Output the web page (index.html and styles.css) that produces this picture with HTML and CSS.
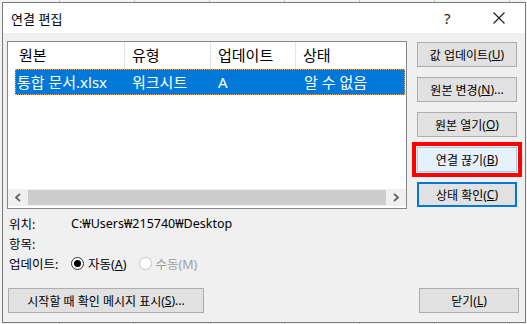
FILE: index.html
```html
<!DOCTYPE html>
<html lang="ko">
<head>
<meta charset="utf-8">
<title>연결 편집</title>
<link rel="stylesheet" href="styles.css">
</head>
<body>
<div class="window">
  <div class="titlebar">
    <span class="title">연결 편집</span>
    <span class="help">?</span>
    <span class="close">
      <svg width="12" height="12" viewBox="0 0 12 12"><path d="M0.5 0.5 L11.5 11.5 M11.5 0.5 L0.5 11.5" stroke="#1a1a1a" stroke-width="1.1" fill="none"/></svg>
    </span>
  </div>
  <div class="content">
    <div class="top">
      <div class="left">
        <div class="list">
          <div class="list-head">
            <div class="hcell c1">원본</div>
            <div class="hcell c2">유형</div>
            <div class="hcell c3">업데이트</div>
            <div class="hcell c4">상태</div>
          </div>
          <div class="list-row selected">
            <div class="cell c1">통합 문서.xlsx</div>
            <div class="cell c2">워크시트</div>
            <div class="cell c3">A</div>
            <div class="cell c4">알 수 없음</div>
          </div>
          <div class="list-space"></div>
          <div class="hscroll">
            <div class="arrow">
              <svg width="8" height="9" viewBox="0 0 8 9"><path d="M6 0.8 L2 4.5 L6 8.2" stroke="#606060" stroke-width="1.8" fill="none"/></svg>
            </div>
            <div class="thumb"></div>
            <div class="arrow">
              <svg width="8" height="9" viewBox="0 0 8 9"><path d="M2 0.8 L6 4.5 L2 8.2" stroke="#606060" stroke-width="1.8" fill="none"/></svg>
            </div>
          </div>
        </div>
        <div class="info">
          <div class="info-row"><span class="label">위치:</span><span class="value">C:₩Users₩215740₩Desktop</span></div>
          <div class="info-row"><span class="label">항목:</span><span class="value"></span></div>
          <div class="info-row">
            <span class="label">업데이트:</span>
            <span class="radio checked"><span class="dot"></span></span>
            <span class="rlabel">자동(<u>A</u>)</span>
            <span class="radio disabled"></span>
            <span class="rlabel disabled-text">수동(M)</span>
          </div>
        </div>
      </div>
      <div class="buttons">
        <div class="btn">값 업데이트(<u>U</u>)</div>
        <div class="btn">원본 변경(<u>N</u>)...</div>
        <div class="btn">원본 열기(<u>O</u>)</div>
        <div class="btn hover highlight">연결 끊기(<u>B</u>)</div>
        <div class="btn default">상태 확인(<u>C</u>)</div>
      </div>
    </div>
    <div class="bottom">
      <div class="btn wide">시작할 때 확인 메시지 표시(<u>S</u>)...</div>
      <div class="btn">닫기(<u>L</u>)</div>
    </div>
  </div>
</div>
</body>
</html>
```
FILE: styles.css
```css
html, body {
  margin: 0;
  padding: 0;
}
body {
  width: 527px;
  height: 324px;
  overflow: hidden;
  padding: 2px 0 0 2px;
  box-sizing: border-box;
  background-color: #f3f3f3;
  background-image: repeating-linear-gradient(to right, transparent 0 59px, #c6c6c6 59px 60px, transparent 60px 75px);
  font-family: "Noto Sans", "Noto Sans CJK KR", sans-serif;
  color: #000;
}
.window {
  width: 524px;
  height: 321px;
  box-sizing: border-box;
  border: 1px solid #7a7a7a;
  background: #f0f0f0;
  display: flex;
  flex-direction: column;
}
.titlebar {
  height: 30px;
  background: #fff;
  display: flex;
  align-items: center;
  flex: none;
}
.title {
  font-family: "Noto Sans CJK KR", sans-serif;
  font-size: 13px;
  margin-left: 8px;
  flex: 1;
}
.help {
  font-family: "Noto Sans", sans-serif;
  font-size: 15px;
  width: 12px;
  margin-right: 37px;
  color: #1a1a1a;
}
.close {
  display: flex;
  margin-right: 20px;
}
.content {
  padding: 8px 6px 0 4px;
  display: flex;
  flex-direction: column;
}
.top {
  display: flex;
  gap: 10px;
}
.left {
  width: 400px;
  display: flex;
  flex-direction: column;
}
.list {
  height: 168px;
  box-sizing: border-box;
  border: 1px solid #828790;
  background: #fff;
  display: flex;
  flex-direction: column;
  font-family: "Noto Sans", "Noto Sans CJK KR", sans-serif;
  font-size: 15px;
}
.list-head {
  height: 27px;
  display: flex;
  flex: none;
}
.hcell {
  box-sizing: border-box;
  border-right: 1px solid #e5e5e5;
  padding-left: 7px;
  line-height: 27px;
  white-space: nowrap;
}
.c1 { width: 117px; padding-left: 11px; }
.c2 { width: 86px; }
.c3 { width: 85px; }
.c4 { width: 108px; border-right: none; }
.list-row {
  height: 26px;
  display: flex;
  margin-left: 7px;
  margin-right: 1px;
  flex: none;
}
.list-row .cell {
  line-height: 26px;
  padding-left: 7px;
  box-sizing: border-box;
  white-space: nowrap;
}
.list-row .c1 { width: 110px; padding-left: 2px; }
.list-row .c2 { width: 86px; }
.list-row .c3 { width: 85px; }
.list-row .c4 { width: 107px; padding-left: 8px; }
.selected {
  background: #0078d7;
  color: #fff;
  outline: 1px dotted #f0a050;
  outline-offset: -1px;
}
.list-space {
  flex: 1;
}
.hscroll {
  height: 17px;
  display: flex;
  background: #f0f0f0;
  flex: none;
  margin-bottom: 2px;
}
.arrow {
  width: 20px;
  display: flex;
  align-items: center;
  justify-content: center;
}
.thumb {
  flex: 1;
  background: #cdcdcd;
  margin: 1px 0;
}
.info {
  padding-top: 4px;
  padding-left: 2px;
  font-family: "Noto Sans", "Noto Sans CJK KR", sans-serif;
  font-size: 12.5px;
}
.info-row {
  height: 20px;
  display: flex;
  align-items: center;
}
.label {
  width: 62px;
  flex: none;
}
.radio {
  width: 13px;
  height: 13px;
  box-sizing: border-box;
  border-radius: 50%;
  border: 1px solid #333;
  background: #fff;
  display: flex;
  align-items: center;
  justify-content: center;
  margin-right: 4px;
  flex: none;
}
.radio .dot {
  width: 7px;
  height: 7px;
  border-radius: 50%;
  background: #000;
}
.radio.disabled {
  border-color: #c4c4c4;
  margin-left: 7px;
}
.rlabel {
  margin-right: 5px;
}
.disabled-text {
  color: #a0a0a0;
}
.buttons {
  width: 100px;
  display: flex;
  flex-direction: column;
  gap: 10px;
  padding-top: 1px;
}
.btn {
  height: 25px;
  box-sizing: border-box;
  border: 1px solid #adadad;
  background: #e1e1e1;
  display: flex;
  align-items: center;
  justify-content: center;
  font-family: "Noto Sans", "Noto Sans CJK KR", sans-serif;
  font-size: 12px;
  white-space: nowrap;
  flex: none;
}
.btn u {
  text-underline-offset: 1px;
}
.btn.hover {
  background: #e5f1fb;
  border-color: #a9cbe8;
}
.btn.highlight {
  outline: 4px solid #ff0000;
  outline-offset: 1px;
}
.btn.default {
  border: 2px solid #0078d7;
}
.bottom {
  display: flex;
  justify-content: space-between;
  margin-top: 15px;
  padding-left: 1px;
}
.btn.wide {
  width: 196px;
}
.bottom .btn {
  width: 100px;
}
.bottom .btn.wide {
  width: 196px;
}
```
